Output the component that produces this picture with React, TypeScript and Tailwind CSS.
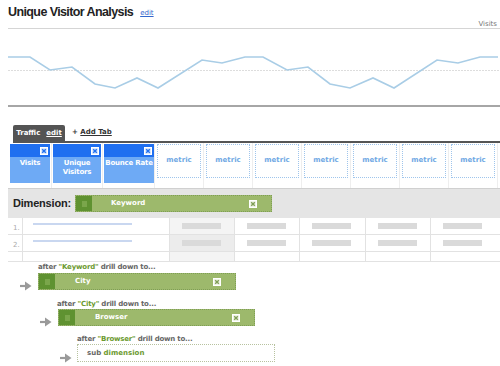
import React from "react";

const pts: [number, number][] = [
  [8, 57], [30, 57], [50, 70], [72, 67], [95, 84], [115, 88], [137, 78], [158, 88],
  [202, 60], [222, 63], [245, 57], [263, 57], [287, 70], [308, 67], [330, 84], [350, 88],
  [373, 78], [394, 88], [437, 60], [458, 63], [480, 57], [498, 57],
];

const sm = { fontFamily: '"DejaVu Sans", Verdana, sans-serif' };

function XBox({ color }: { color: string }) {
  return (
    <svg width="8" height="8" viewBox="0 0 8 8">
      <rect x="0.5" y="0.5" width="7" height="7" fill="#fff" fillOpacity="0.85" stroke="#fff" />
      <path d="M2.2 2.2 L5.8 5.8 M5.8 2.2 L2.2 5.8" stroke={color} strokeWidth="1.4" />
    </svg>
  );
}

function Arrow() {
  return (
    <svg width="12" height="10" viewBox="0 0 12 10">
      <path d="M0 5 H6" stroke="#9a9a9a" strokeWidth="2.2" />
      <path d="M5 0.5 L11.5 5 L5 9.5 Z" fill="#9a9a9a" />
    </svg>
  );
}

function Pill({ label, w, textPl }: { label: string; w: number; textPl: number }) {
  return (
    <div
      className="flex items-center h-[17px] bg-[#9db96c] border border-dotted border-[#7f9e55] shrink-0"
      style={{ width: w }}
    >
      <div className="h-full w-[16px] bg-[#5f9231] flex items-center justify-center">
        <div className="w-[5px] h-[6px] bg-[#7aa64b]" />
      </div>
      <span className="text-[7px] font-bold text-white flex-1" style={{ ...sm, paddingLeft: textPl }}>
        {label}
      </span>
      <div className="mr-[14px] flex items-center">
        <XBox color="#7f9e55" />
      </div>
    </div>
  );
}

function BlueTile({ w, ml, lines }: { w: number; ml: number; lines: string[] }) {
  return (
    <div className="flex flex-col h-[39px] mt-[1px]" style={{ width: w, marginLeft: ml }}>
      <div className="h-[13px] bg-[#1f6ff0] flex items-center justify-end pr-[2px]">
        <XBox color="#1f6ff0" />
      </div>
      <div
        className="flex-1 bg-[#6eaaf5] text-white font-bold text-[7px] leading-[9px] text-center pt-[2px] whitespace-nowrap tracking-[-0.2px]"
        style={sm}
      >
        {lines.map((l) => (
          <div key={l}>{l}</div>
        ))}
      </div>
    </div>
  );
}

export default function App() {
  const cols = [15, 147, 65, 65, 66, 65, 69];
  const row = (n: string | null, h: number, idx: number) => (
    <div className="flex ml-[8px] border-b border-[#e2e2e2]" style={{ height: h }} key={idx}>
      {cols.map((w, i) => (
        <div
          key={i}
          className={`relative h-full ${i < cols.length - 1 ? "border-r border-[#e2e2e2]" : ""} ${
            i === 2 ? (idx === 1 ? "bg-[#ececec]" : "bg-[#f4f4f4]") : ""
          }`}
          style={{ width: w }}
        >
          {i === 0 && n && (
            <span className="absolute left-[5px] top-[5px] text-[7px] text-[#aaa]" style={sm}>
              {n}
            </span>
          )}
          {i === 1 && n && <div className="ml-[10px] mt-[5px] w-[99px] h-[2px] bg-[#c9d7f0]" />}
          {i >= 2 && n && <div className="ml-[12px] mt-[5px] w-[39px] h-[6px] bg-[#dadada]" />}
        </div>
      ))}
    </div>
  );

  const lbl = "text-[7px] font-bold text-[#666] tracking-[-0.2px]";

  return (
    <div className="w-[500px] h-[366px] bg-white overflow-hidden relative" style={{ fontFamily: '"Liberation Sans", Arial, sans-serif' }}>
      {/* Header */}
      <div className="h-[20px] flex items-end pl-[8px]">
        <span className="text-[12.5px] font-bold text-[#222] leading-[16px] tracking-[-0.6px]">Unique Visitor Analysis</span>
        <span className="ml-[7px] mb-[3px] text-[7px] text-[#3366cc] underline leading-[8px]" style={sm}>
          edit
        </span>
      </div>
      <div className="h-[8px] text-right pr-[3px] text-[7px] leading-[8px] text-[#777]" style={sm}>
        Visits
      </div>
      <svg width="500" height="80" viewBox="0 28 500 80" className="block">
        <line x1="8" y1="28.5" x2="500" y2="28.5" stroke="#d5d5d5" strokeWidth="1" />
        <line x1="8" y1="70.5" x2="500" y2="70.5" stroke="#ddd" strokeWidth="1" strokeDasharray="2 1" />
        <line x1="8" y1="106" x2="500" y2="106" stroke="#888" strokeWidth="1.5" />
        <polyline
          points={pts.map((p) => p.join(",")).join(" ")}
          fill="none"
          stroke="#a9cde6"
          strokeWidth="1.6"
        />
      </svg>
      <div className="h-[17px]" />
      {/* Tabs */}
      <div className="h-[16px] flex items-end pl-[13px]">
        <div className="h-[16px] w-[52px] bg-[#545454] rounded-t-[2px] flex items-center justify-center gap-[6px] text-[7px] font-bold text-white" style={sm}>
          <span>Traffic</span>
          <span className="underline">edit</span>
        </div>
        <div className="ml-[7px] mb-[4px] text-[7px] text-[#333] font-bold" style={sm}>
          + <span className="underline">Add Tab</span>
        </div>
      </div>
      <div className="h-[2px] ml-[13px] bg-[#555]" />
      {/* Metric row */}
      <div className="h-[45px] flex pl-[8px]">
        <div className="w-[44px] h-full border-r border-[#eee]">
          <BlueTile w={40} ml={2} lines={["Visits"]} />
        </div>
        <div className="w-[51px] h-full border-r border-[#eee]">
          <BlueTile w={48} ml={1} lines={["Unique", "Visitors"]} />
        </div>
        <div className="w-[52px] h-full border-r border-[#eee]">
          <BlueTile w={50} ml={1} lines={["Bounce Rate"]} />
        </div>
        {[0, 1, 2, 3, 4, 5, 6].map((i) => (
          <div key={i} className="w-[49px] h-full border-r border-[#eee]">
            <div
              className="ml-[2px] mt-[1px] w-[44px] h-[34px] border border-dotted border-[#9fc5ec] text-[7px] font-bold text-[#70a8e4] text-center pt-[10px]"
              style={sm}
            >
              metric
            </div>
          </div>
        ))}
      </div>
      {/* Dimension bar */}
      <div className="h-[30px] ml-[8px] bg-[#e5e5e5] border-t border-[#d0d0d0] flex items-center">
        <span className="ml-[5px] text-[11px] font-bold text-[#222] w-[62px] shrink-0 tracking-[-0.2px] whitespace-nowrap">Dimension:</span>
        <Pill label="Keyword" w={197} textPl={19} />
      </div>
      {/* Table */}
      {row("1.", 17, 0)}
      {row("2.", 17, 1)}
      {row(null, 10, 2)}
      {/* Drill downs */}
      <div className={`pl-[38px] leading-[10px] h-[10px] ${lbl}`} style={sm}>
        after <span className="text-[#6c9a30]">"Keyword"</span> drill down to...
      </div>
      <div className="flex items-end mt-[1px] h-[17px]">
        <div className="ml-[20px] w-[18px] mb-[-1px]">
          <Arrow />
        </div>
        <Pill label="City" w={198} textPl={20} />
      </div>
      <div className={`mt-[9px] pl-[57px] leading-[10px] h-[10px] ${lbl}`} style={sm}>
        after <span className="text-[#6c9a30]">"City"</span> drill down to...
      </div>
      <div className="flex items-end h-[17px]">
        <div className="ml-[40px] w-[18px] mb-[-1px]">
          <Arrow />
        </div>
        <Pill label="Browser" w={197} textPl={20} />
      </div>
      <div className={`mt-[9px] pl-[77px] leading-[9px] h-[9px] ${lbl}`} style={sm}>
        after <span className="text-[#6c9a30]">"Browser"</span> drill down to...
      </div>
      <div className="flex items-end h-[18px]">
        <div className="ml-[60px] w-[17px] mb-[-1px]">
          <Arrow />
        </div>
        <div
          className="w-[198px] h-[18px] border border-dotted border-[#b7c29f] flex items-center pl-[9px] text-[7px] font-bold text-[#666]"
          style={sm}
        >
          sub&nbsp;<span className="text-[#6c9a30]">dimension</span>
        </div>
      </div>
    </div>
  );
}
